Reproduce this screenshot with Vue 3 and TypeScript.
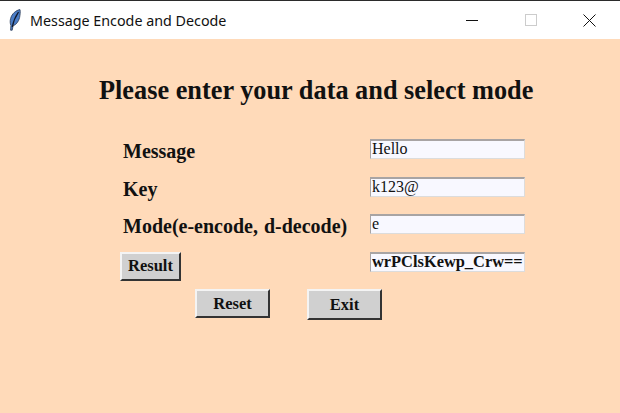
<script setup lang="ts">
const rows: { label: string; value: string }[] = [
  { label: 'Message', value: 'Hello' },
  { label: 'Key', value: 'k123@' },
  { label: 'Mode(e-encode, d-decode)', value: 'e' },
]
</script>

<template>
  <div class="window">
    <header class="titlebar">
      <svg class="feather" width="12" height="22" viewBox="0 0 12 22">
        <path d="M11 .6C7 1.200 2.800 4.800 1.600 9.500c-.7 2.600-.5 5 .3 7L1.600 21.200h1.600l.9-4.400c3-1 5.700-4.300 6.500-8.300.5-2.700.9-5.700.4-7.900z" fill="#4a7cc6" stroke="#2a3a55" stroke-width=".8"/>
        <path d="M9.500 3C6.500 7.500 4.300 12 3.300 18" fill="none" stroke="#10192b" stroke-width="1.300"/>
      </svg>
      <span class="title">Message Encode and Decode</span>
      <div class="controls">
        <span class="ctl"><svg width="12" height="12" viewBox="0 0 12 12"><path d="M0 6.500h12" stroke="#111" stroke-width="1"/></svg></span>
        <span class="ctl"><svg width="12" height="12" viewBox="0 0 12 12"><rect x=".5" y=".5" width="11" height="11" fill="none" stroke="#ccc"/></svg></span>
        <span class="ctl"><svg width="13" height="13" viewBox="0 0 13 13"><path d="M.5 .5l12 12M12.500 .5l-12 12" stroke="#111" stroke-width="1"/></svg></span>
      </div>
    </header>
    <main class="client">
      <h1 class="heading">Please enter your data and select mode</h1>
      <div class="form">
        <div v-for="r in rows" :key="r.label" class="row">
          <label class="label">{{ r.label }}</label>
          <input class="entry" :value="r.value" readonly />
        </div>
        <div class="row">
          <button class="btn result" type="button">Result</button>
          <input class="entry output" value="wrPClsKewp_Crw==" readonly />
        </div>
      </div>
      <div class="actions">
        <button class="btn wide" type="button">Reset</button>
        <button class="btn wide exit" type="button">Exit</button>
      </div>
    </main>
  </div>
</template>

<style scoped>
.window {
  width: 620px;
  height: 413px;
  display: flex;
  flex-direction: column;
  overflow: hidden;
  font-family: "Liberation Serif", serif;
}
.titlebar {
  height: 39px;
  box-sizing: border-box;
  border-top: 1px solid #2b2b2b;
  background: #fff;
  display: flex;
  align-items: center;
  padding-left: 9px;
  padding-right: 1px;
}
.feather {
  flex: none;
}
.title {
  margin-left: 9px;
  font: 14.3px "Noto Sans", sans-serif;
  color: #111;
}
.controls {
  margin-left: auto;
  display: flex;
}
.ctl {
  width: 59px;
  height: 38px;
  display: flex;
  align-items: center;
  justify-content: center;
}
.client {
  flex: 1;
  background: #ffdab9;
  display: flex;
  flex-direction: column;
}
.heading {
  margin: 37px 0 0 99px;
  font-size: 26.3px;
  line-height: 30px;
  font-weight: bold;
  color: #111;
  white-space: nowrap;
}
.form {
  margin: 33px 0 0 120px;
  display: flex;
  flex-direction: column;
}
.row {
  display: grid;
  grid-template-columns: 250px 155px;
  height: 37.500px;
  align-items: start;
}
.label {
  padding: 0 0 0 3px;
  font-size: 20px;
  line-height: 24px;
  font-weight: bold;
  color: #111;
  white-space: nowrap;
  word-spacing: 1px;
}
.entry {
  width: 155px;
  height: 20px;
  box-sizing: border-box;
  padding: 0 0 1px 1px;
  background: #f8f8ff;
  border: 1px solid #dcdcdc;
  border-top: 2px solid #a8a4a4;
  border-left: 1px solid #a8a4a4;
  border-radius: 0;
  outline: none;
  font-family: "Liberation Serif", serif;
  font-size: 16px;
  color: #111;
}
.output {
  font-size: 16.4px;
  font-weight: bold;
}
.btn {
  box-sizing: border-box;
  padding: 0;
  background: #d0d0d0;
  border: 2px solid;
  border-color: #f4f4f4 #333 #333 #f4f4f4;
  border-radius: 0;
  font-family: "Liberation Serif", serif;
  font-size: 16.5px;
  font-weight: bold;
  color: #111;
}
.result {
  width: 61px;
  height: 29px;
}
.actions {
  margin: 0 0 0 195px;
  display: flex;
  gap: 37px;
}
.wide {
  width: 75px;
  height: 29px;
}
.exit {
  height: 31px;
}
</style>

<style>
html, body {
  margin: 0;
  background: #ffdab9;
}
</style>
